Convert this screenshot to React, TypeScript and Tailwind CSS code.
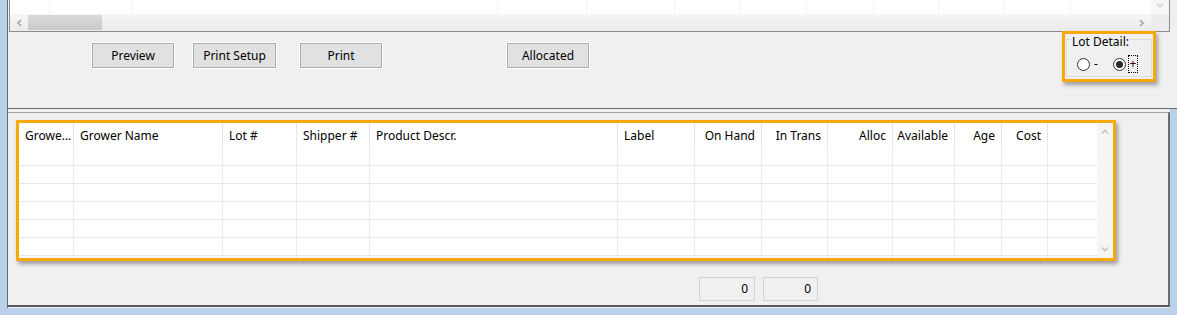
import * as React from 'react'

type Dir = 'left' | 'right' | 'up' | 'down'

function Chevron({ dir, className }: { dir: Dir; className?: string }) {
  const d = {
    left: 'M5 1 L2 4 L5 7',
    right: 'M3 1 L6 4 L3 7',
    up: 'M1 5.5 L4 2.5 L7 5.5',
    down: 'M1 2.5 L4 5.5 L7 2.5',
  }[dir]
  return (
    <svg width="8" height="8" viewBox="0 0 8 8" className={className}>
      <path d={d} fill="none" stroke="currentColor" strokeWidth="1.6" />
    </svg>
  )
}

const topCols = ['w-[40px]', 'w-[83px]', 'w-[365px]', 'w-[89px]', 'w-[88px]', 'w-[66px]', 'w-[66px]', 'w-[67px]', 'w-[65px]', 'w-[66px]', 'w-[66px]']

const cols = [
  { w: 'w-[55px]', label: 'Growe...' },
  { w: 'w-[149px]', label: 'Grower Name' },
  { w: 'w-[74px]', label: 'Lot #' },
  { w: 'w-[73px]', label: 'Shipper #' },
  { w: 'w-[248px]', label: 'Product Descr.' },
  { w: 'w-[77px]', label: 'Label' },
  { w: 'w-[67px]', label: 'On Hand', right: true },
  { w: 'w-[66px]', label: 'In Trans', right: true },
  { w: 'w-[65px]', label: 'Alloc', right: true },
  { w: 'w-[62px]', label: 'Available', right: true },
  { w: 'w-[47px]', label: 'Age', right: true },
  { w: 'w-[46px]', label: 'Cost', right: true },
  { w: 'w-[49px]', label: '', last: true },
]

function Btn({ label, className }: { label: string; className?: string }) {
  return (
    <button className={`h-[25px] w-[82px] bg-[#e1e1e1] border border-[#adadad] ring-1 ring-white text-[12px] text-black leading-none ${className ?? ''}`}>
      {label}
    </button>
  )
}

export default function App() {
  return (
    <div className="w-[1177px] h-[315px] bg-[#b9d1ea] overflow-hidden font-['Noto_Sans',sans-serif] text-[12px] text-black">
      {/* upper form area */}
      <div className="ml-[7px] h-[109px] bg-[#f0f0f0] border-l border-b border-[#6b6b6b] flex flex-col">
        <div className="flex h-[32px]">
          <div className="ml-px w-[1161px] h-[32px] border-l border-r border-b border-[#8c8c8c] bg-white flex flex-col">
            <div className="flex h-[14px]">
              <div className="flex w-[1141px]">
                {topCols.map((w, i) => (
                  <div key={i} className={`${w} h-full border-r border-[#f4f4f4]`} />
                ))}
              </div>
              <div className="flex-1 bg-[#f7f7f7] flex justify-center pt-[1px] text-[#d2d2d2]">
                <Chevron dir="down" />
              </div>
            </div>
            <div className="flex h-[17px]">
              <div className="w-[1141px] h-full bg-gradient-to-b from-[#f6f6f6] to-[#ebebeb] flex items-center">
                <Chevron dir="left" className="ml-[6px] text-[#a3a3a3]" />
                <div className="ml-[4px] w-[74px] h-[15px] bg-gradient-to-b from-[#dadada] to-[#c9c9c9]" />
                <div className="flex-1" />
                <Chevron dir="right" className="mr-[6px] text-[#a3a3a3]" />
              </div>
              <div className="flex-1 bg-[#ededed]" />
            </div>
          </div>
        </div>
        <div className="flex items-start">
          <Btn label="Preview" className="ml-[84px] mt-[11px]" />
          <Btn label="Print Setup" className="ml-[19px] mt-[11px] w-[83px]" />
          <Btn label="Print" className="ml-[24px] mt-[11px]" />
          <Btn label="Allocated" className="ml-[125px] mt-[11px]" />
          {/* Lot Detail group, highlighted */}
          <div className="ml-[473px] -mt-[1px] w-[94px] h-[51px] border-[3px] border-[#f7a90c] shadow-[2px_3px_4px_rgba(0,0,0,0.35)] relative">
            <div className="absolute left-[1px] top-[5px] right-[1px] bottom-[2px] border border-[#dcdcdc]" />
            <div className="relative ml-[6px] mt-[1px] leading-[14px] bg-[#f0f0f0] w-fit px-[1px] text-[12px]">Lot Detail:</div>
            <div className="relative flex items-center mt-[6px] ml-[12px]">
              <div className="w-[13px] h-[13px] rounded-full border border-[#333] bg-white" />
              <span className="ml-[4px] w-[4px] leading-none">-</span>
              <div className="ml-[15px] w-[13px] h-[13px] rounded-full border border-[#333] bg-white flex items-center justify-center">
                <div className="w-[7px] h-[7px] rounded-full bg-[#2a2a2a]" />
              </div>
              <span className="ml-[2px] h-[18px] w-[10px] border border-dotted border-black flex items-center justify-center leading-none text-[#400]">+</span>
            </div>
          </div>
        </div>
      </div>

      {/* lower panel */}
      <div className="ml-[7px] w-[1163px] h-[199px] bg-[#f0f0f0] border-l border-[#6b6b6b] pt-[3px]">
        <div className="h-[195px] border-t border-[#a0a0a0] border-r-[2px] border-r-[#6b6b6b] border-b-[2px] border-b-[#5c5c5c] flex flex-col">
          <div className="ml-[8px] mt-[7px] w-[1100px] h-[141px] border-[3px] border-[#f7a90c] shadow-[2px_3px_4px_rgba(0,0,0,0.35)] bg-white flex overflow-hidden">
            <div className="w-[1078px] flex flex-col">
              <div className="flex h-[25px] shrink-0">
                {cols.map((c, i) => (
                  <div
                    key={i}
                    className={`${c.w} shrink-0 h-full flex items-center px-[6px] ${c.right ? 'justify-end' : ''} ${c.last ? '' : 'border-r border-[#e6e6e6]'} whitespace-nowrap`}
                  >
                    {c.label}
                  </div>
                ))}
              </div>
              {[0, 1, 2, 3, 4, 5, 6].map((r) => (
                <div key={r} className="flex h-[18px] shrink-0 border-b border-[#e8e8e8]">
                  {cols.map((c, i) => (
                    <div key={i} className={`${c.w} shrink-0 h-full ${c.last ? '' : 'border-r border-[#ececec]'}`} />
                  ))}
                </div>
              ))}
            </div>
            <div className="w-[16px] h-full bg-[#f5f5f5] flex flex-col items-center justify-between py-[5px] text-[#c4c4c4]">
              <Chevron dir="up" />
              <Chevron dir="down" />
            </div>
          </div>
          <div className="flex mt-[16px] ml-[691px] gap-[8px]">
            <div className="w-[56px] h-[24px] border border-[#d3d3d3] bg-[#f0f0f0] flex items-center justify-end pr-[6px]">0</div>
            <div className="w-[55px] h-[24px] border border-[#d3d3d3] bg-[#f0f0f0] flex items-center justify-end pr-[6px]">0</div>
          </div>
        </div>
      </div>
    </div>
  )
}
